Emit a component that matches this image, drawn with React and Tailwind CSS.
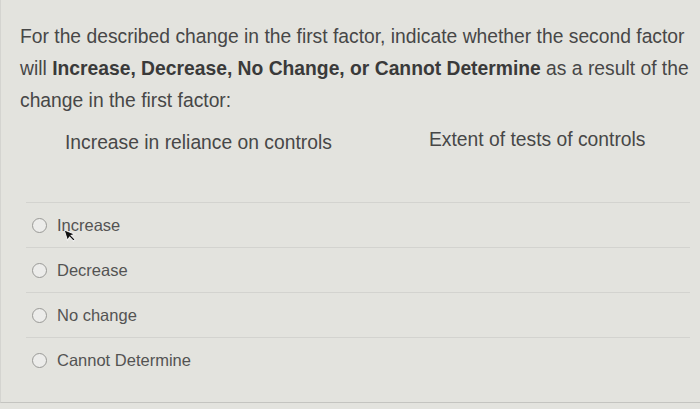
const options = ["Increase", "Decrease", "No change", "Cannot Determine"];

function Cursor() {
  return (
    <svg className="absolute left-[65px] top-[227px]" width="12" height="16" viewBox="0 0 12 16">
      <path d="M1 1 L1 12 L4 9.5 L6.5 14.5 L8.5 13.5 L6 8.5 L10 8.5 Z" fill="#111" stroke="#f2f2f2" strokeWidth="1" transform="rotate(-18 6 8)" />
    </svg>
  );
}

export default function App() {
  return (
    <div
      className="relative w-[700px] h-[409px] overflow-hidden bg-[#e3e3de] text-[#474747]"
      style={{ fontFamily: '"Liberation Sans", Arial, sans-serif' }}
    >
      <div className="h-[403px] border-b border-l border-b-[#c4c4c0] border-l-[#d4d4d0] pt-[21px]">
        {/* Question */}
        <p className="pl-[19px] pr-[4px] text-[19.3px] leading-[32px]">
          For the described change in the first factor, indicate whether the second factor will{" "}
          <span className="font-bold text-[#3a3a3a]">Increase, Decrease, No Change, or Cannot Determine</span> as a
          result of the change in the first factor:
        </p>

        {/* Factors */}
        <div className="mt-[10px] flex text-[19.3px] leading-[32px]">
          <div className="ml-[64px] w-[364px]">Increase in reliance on controls</div>
          <div className="-mt-[3px]">Extent of tests of controls</div>
        </div>

        {/* Options */}
        <div className="mt-[43px] ml-[25px] mr-[10px]">
          {options.map((o) => (
            <label
              key={o}
              className="flex h-[45px] items-center gap-[10px] border-t border-[#d3d3cf] pl-[6px] text-[16.5px] text-[#535353]"
            >
              <span className="block size-[15px] rounded-full border-[1.5px] border-[#999996] bg-[#ececea]" />
              {o}
            </label>
          ))}
        </div>
      </div>
      <Cursor />
    </div>
  );
}
